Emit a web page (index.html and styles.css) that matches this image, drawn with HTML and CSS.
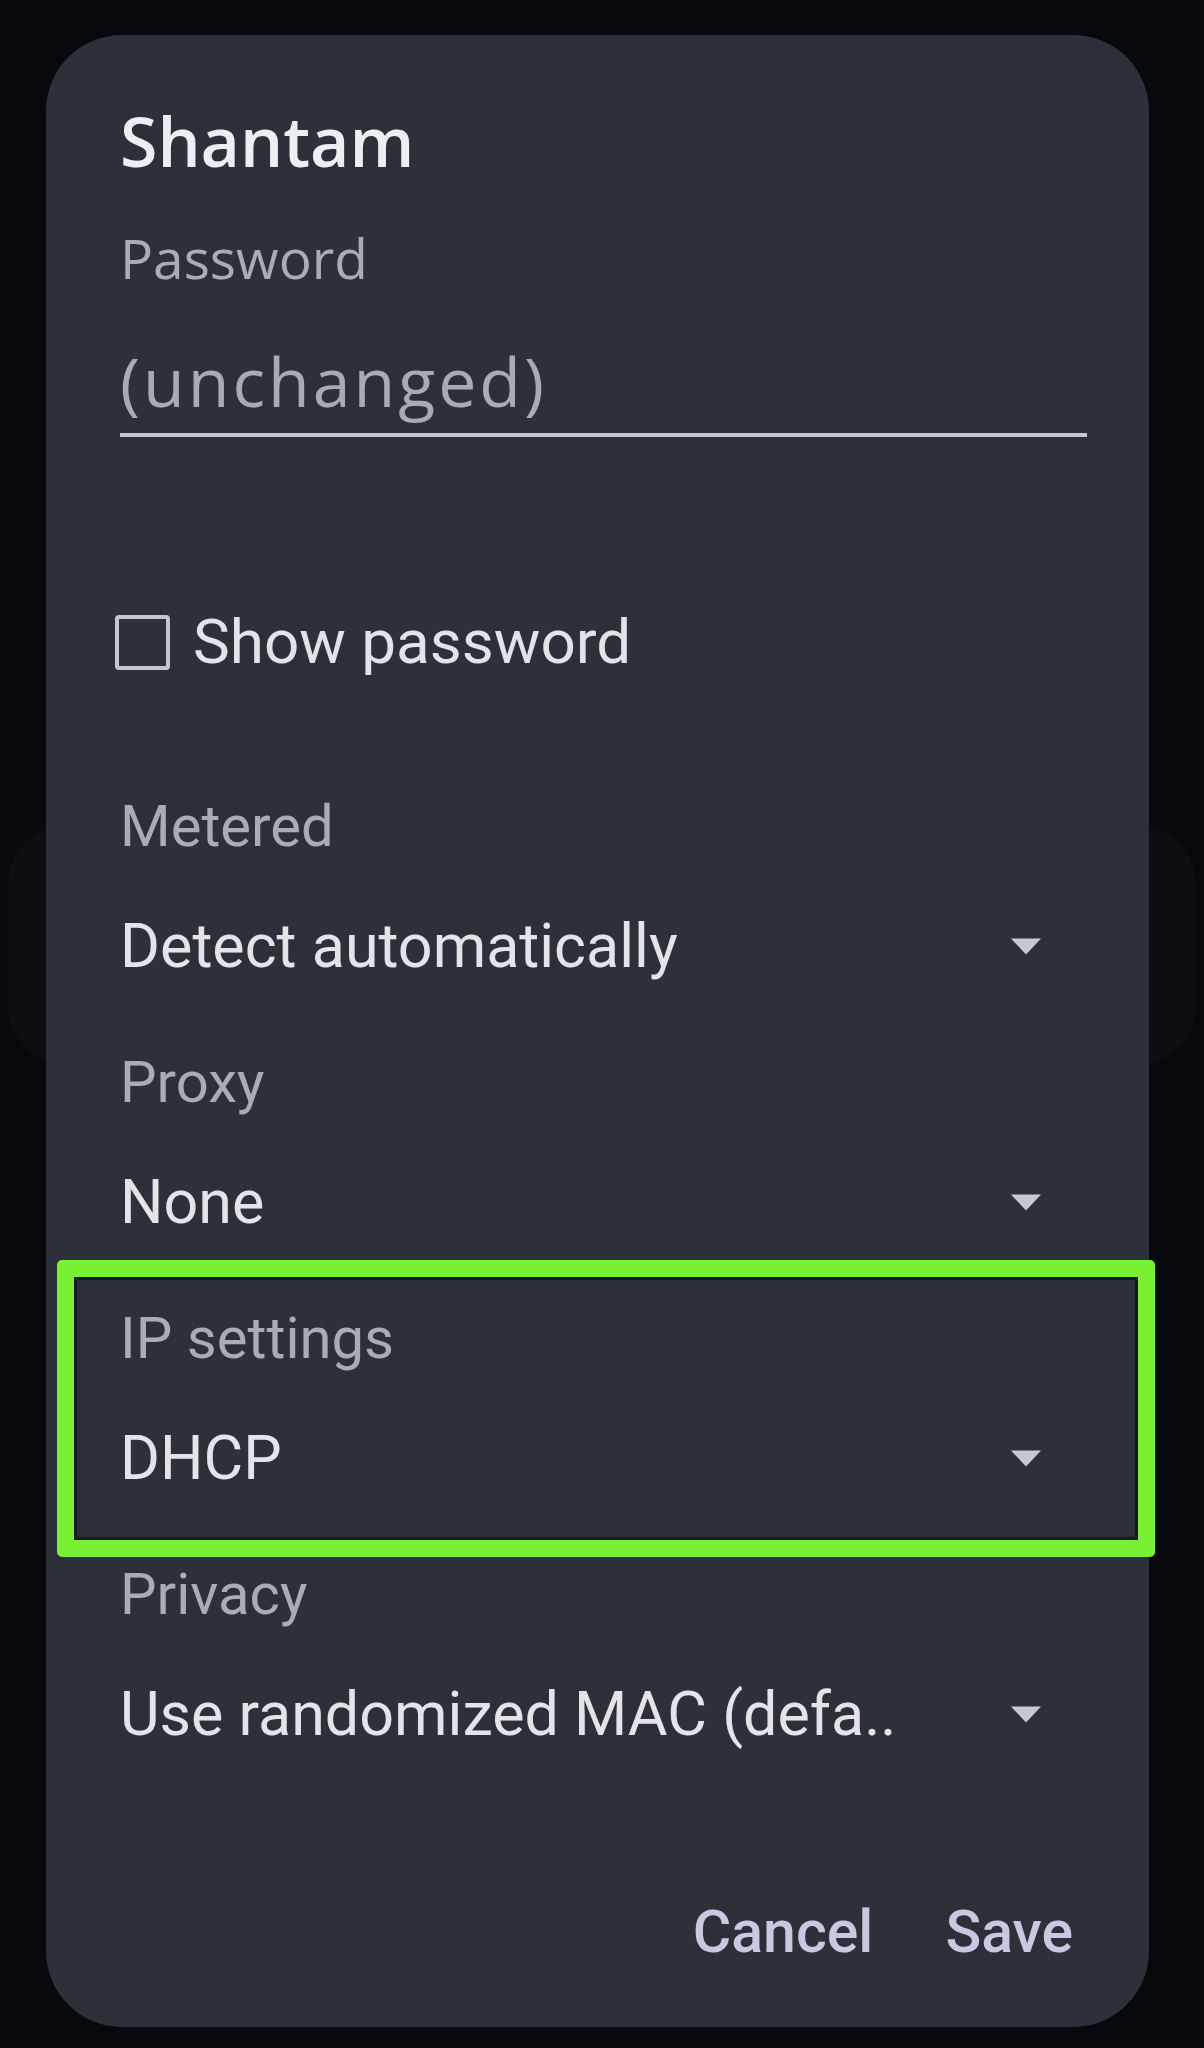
FILE: index.html
```html
<!DOCTYPE html>
<html lang="en">
<head>
    <title>Shantam - Wi-Fi</title>
    <link rel="stylesheet" href="styles.css">
</head>
<body>
<div class="backdrop"></div>
<div class="dialog">
    <h1 class="title">Shantam</h1>

    <div class="label label-os">Password</div>
    <div class="input">(unchanged)</div>

    <div class="checkbox-row">
        <span class="checkbox"></span>
        <span>Show password</span>
    </div>

    <div class="field first">
        <div class="label">Metered</div>
        <div class="select">
            <span>Detect automatically</span>
            <svg class="arrow" viewBox="0 0 32 17"><path d="M1 0.5 H31 L16 16.5 Z"/></svg>
        </div>
    </div>

    <div class="field">
        <div class="label">Proxy</div>
        <div class="select">
            <span>None</span>
            <svg class="arrow" viewBox="0 0 32 17"><path d="M1 0.5 H31 L16 16.5 Z"/></svg>
        </div>
    </div>

    <div class="field highlight">
        <div class="label">IP settings</div>
        <div class="select">
            <span>DHCP</span>
            <svg class="arrow" viewBox="0 0 32 17"><path d="M1 0.5 H31 L16 16.5 Z"/></svg>
        </div>
    </div>

    <div class="field">
        <div class="label">Privacy</div>
        <div class="select">
            <span>Use randomized MAC (defa..</span>
            <svg class="arrow" viewBox="0 0 32 17"><path d="M1 0.5 H31 L16 16.5 Z"/></svg>
        </div>
    </div>

    <div class="actions">
        <span class="btn">Cancel</span>
        <span class="btn">Save</span>
    </div>
</div>
</body>
</html>
```

FILE: styles.css
```css
body {
    margin: 0;
    height: 2048px;
    background: #07090c;
    font-family: Roboto, "Liberation Sans", sans-serif;
    overflow: hidden;
    position: relative;
}

/* card of the settings page, dimmed behind the dialog */
.backdrop {
    position: absolute;
    left: 8px;
    right: 8px;
    top: 825px;
    height: 240px;
    border-radius: 60px;
    background: #0c0e11;
}

.dialog {
    position: relative;
    margin: 35px 0 0 46px;
    width: 1103px;
    height: 1992px;
    box-sizing: border-box;
    padding: 66px 62px 0 74px;
    background: #2d3038;
    border-radius: 76px;
}

.title {
    margin: 0 0 45px;
    font-family: "Open Sans", "Noto Sans", sans-serif;
    font-weight: 600;
    font-size: 68px;
    line-height: 80px;
    color: #eceef2;
}

.label {
    font-size: 58px;
    line-height: 64px;
    color: #a9acb4;
}

.label-os {
    font-family: "Open Sans", "Noto Sans", sans-serif;
    font-size: 55px;
    margin-bottom: 51px;
}

.input {
    font-family: "Open Sans", "Noto Sans", sans-serif;
    font-size: 68px;
    line-height: 80px;
    letter-spacing: 3px;
    color: #a7abb3;
    padding-bottom: 12px;
    border-bottom: 4px solid #c3c8d6;
}

.checkbox-row {
    display: flex;
    align-items: center;
    margin: 165px 0 0 -5px;
    font-size: 62px;
    line-height: 80px;
    color: #e2e3e7;
}

.checkbox {
    width: 47px;
    height: 47px;
    border: 4px solid #c4c7cf;
    border-radius: 4px;
    margin-right: 23px;
}

.field {
    position: relative;
    margin-top: 64px;
}

.field.first {
    margin-top: 112px;
}

.select {
    display: flex;
    align-items: center;
    justify-content: space-between;
    margin-top: 48px;
    font-size: 61px;
    line-height: 80px;
    color: #e4e4e8;
}

.arrow {
    width: 32px;
    height: 17px;
    margin-right: 45px;
    fill: #c6c9d0;
}

/* green annotation box drawn over the screenshot */
.highlight::after {
    content: "";
    position: absolute;
    top: -46px;
    left: -63px;
    right: -68px;
    bottom: -59px;
    border: 17px solid #79f032;
    border-radius: 5px;
    box-shadow: inset 0 0 0 3px #16191d;
}

.actions {
    display: flex;
    justify-content: flex-end;
    gap: 72px;
    margin: 138px 14px 0 0;
}

.btn {
    font-size: 59px;
    font-weight: 500;
    line-height: 80px;
    color: #c6cae0;
}
```
